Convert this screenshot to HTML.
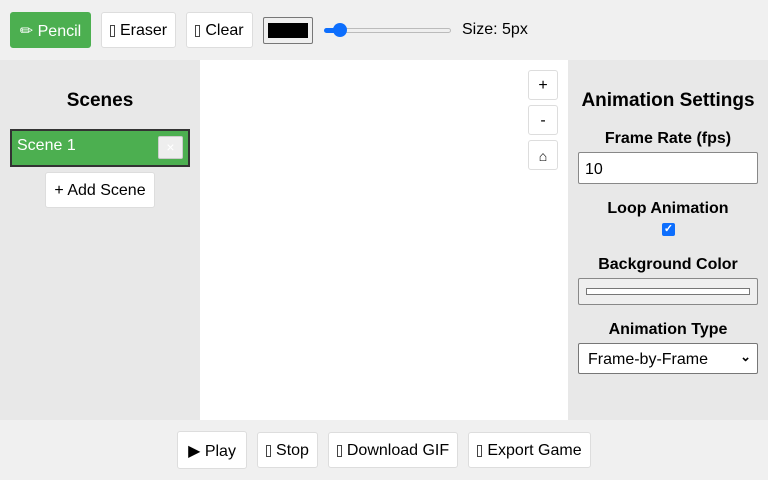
<!DOCTYPE html>
<html><head><style>
*{box-sizing:border-box;margin:0;padding:0}
body{width:768px;height:480px;overflow:hidden;font-family:"Liberation Sans",sans-serif;background:#f0f0f0;position:relative;color:#000}
.a{position:absolute}
.btn{position:absolute;background:#fff;border:1px solid #ddd;border-radius:3px;font-size:16px;display:flex;align-items:center;justify-content:center;white-space:nowrap;padding-top:2px}
.tofu{display:inline-block;width:5px;height:12px;border:1px solid #444;margin-right:5px;vertical-align:-1px}
.lbl{position:absolute;left:568px;width:200px;text-align:center;font-weight:bold;font-size:16px}
</style></head><body>
<div class="a" style="left:0;top:60px;width:200px;height:360px;background:#e8e8e8"></div>
<div class="a" style="left:200px;top:60px;width:368px;height:360px;background:#fff"></div>
<div class="a" style="left:568px;top:60px;width:200px;height:360px;background:#e8e8e8"></div>

<div class="btn" style="left:10px;top:12px;width:81px;height:36px;background:#4caf50;border-color:#4caf50;color:#fff">✏ Pencil</div>
<div class="btn" style="left:101px;top:12px;width:75px;height:36px"><span class="tofu"></span>Eraser</div>
<div class="btn" style="left:186px;top:12px;width:67px;height:36px"><span class="tofu"></span>Clear</div>
<div class="a" style="left:263px;top:17px;width:50px;height:27px;border:1px solid #777;border-radius:2px;background:#efefef;padding:5px 4px"><div style="background:#000;width:100%;height:100%"></div></div>
<div class="a" style="left:325px;top:28px;width:126px;height:5px;border-radius:3px;background:#efefef;border:1px solid #bbb"></div>
<div class="a" style="left:324px;top:28px;width:14px;height:5px;border-radius:3px;background:#0d6efd"></div>
<div class="a" style="left:333px;top:23px;width:14px;height:14px;border-radius:50%;background:#0d6efd"></div>
<div class="a" style="left:462px;top:21px;font-size:16px">Size: 5px</div>

<div class="a" style="left:0;top:90px;width:200px;text-align:center;font-weight:bold;font-size:19px">Scenes</div>
<div class="a" style="left:10px;top:129px;width:180px;height:38px;background:#4caf50;border:2px solid #333"></div>
<div class="a" style="left:17px;top:137px;color:#fff;font-size:16px">Scene 1</div>
<div class="a" style="left:158px;top:136px;width:25px;height:23px;background:#eee;border:1px solid #ccc;border-radius:2px;color:#fff;text-align:center;font-size:14px;line-height:21px">×</div>
<div class="btn" style="left:45px;top:172px;width:110px;height:36px">+ Add Scene</div>

<div class="btn" style="left:528px;top:70px;width:30px;height:30px">+</div>
<div class="btn" style="left:528px;top:105px;width:30px;height:30px">-</div>
<div class="btn" style="left:528px;top:140px;width:30px;height:30px;font-size:14px">⌂</div>

<div class="lbl" style="top:90px;font-size:19px">Animation Settings</div>
<div class="lbl" style="top:130px">Frame Rate (fps)</div>
<div class="a" style="left:578px;top:152px;width:180px;height:32px;background:#fff;border:1px solid #888;border-radius:2px;font-size:16px;padding:8px 6px">10</div>
<div class="lbl" style="top:200px">Loop Animation</div>
<div class="a" style="left:662px;top:223px;width:13px;height:13px;background:#0d6efd;border-radius:2px;color:#fff;font-size:11px;text-align:center;line-height:13px;font-weight:bold">✓</div>
<div class="lbl" style="top:256px">Background Color</div>
<div class="a" style="left:578px;top:278px;width:180px;height:27px;background:#efefef;border:1px solid #888;border-radius:2px;padding:9px 7px"><div style="height:7px;border:1px solid #777;background:#fff"></div></div>
<div class="lbl" style="top:321px">Animation Type</div>
<div class="a" style="left:578px;top:343px;width:180px;height:31px;background:#fff;border:1px solid #777;border-radius:2px;font-size:16px;padding:7px 9px">Frame-by-Frame<span style="position:absolute;right:6px;top:5px;font-size:13px;font-weight:bold">⌄</span></div>

<div class="btn" style="left:177px;top:431px;width:70px;height:38px">▶&nbsp;Play</div>
<div class="btn" style="left:257px;top:432px;width:61px;height:36px"><span class="tofu"></span>Stop</div>
<div class="btn" style="left:328px;top:432px;width:130px;height:36px"><span class="tofu"></span>Download GIF</div>
<div class="btn" style="left:468px;top:432px;width:123px;height:36px"><span class="tofu"></span>Export Game</div>
</body></html>
